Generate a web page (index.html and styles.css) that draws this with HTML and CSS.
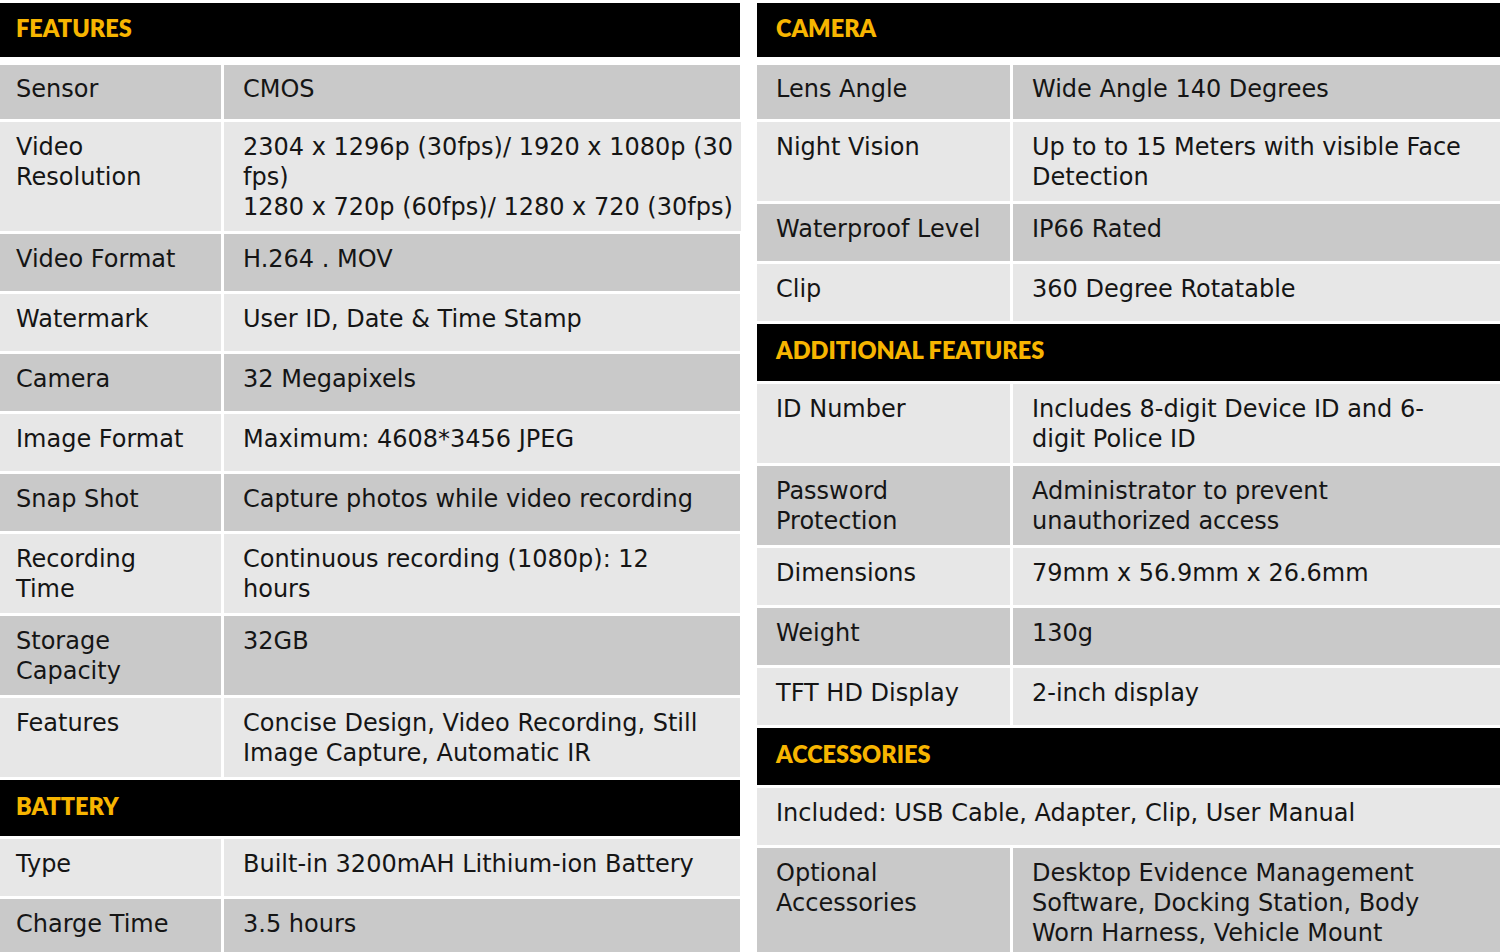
FILE: index.html
```html
<!DOCTYPE html>
<html>
<head>
<meta charset="utf-8">
<link rel="stylesheet" href="styles.css">
</head>
<body>
<div class="page">
  <div class="col col-left">
    <div class="head head-first">FEATURES</div>
    <div class="row dark first"><div class="k">Sensor</div><div class="v">CMOS</div></div>
    <div class="row light"><div class="k">Video<br>Resolution</div><div class="v">2304 x 1296p (30fps)/ 1920 x 1080p (30<br>fps)<br>1280 x 720p (60fps)/ 1280 x 720 (30fps)</div></div>
    <div class="row dark"><div class="k">Video Format</div><div class="v">H.264 . MOV</div></div>
    <div class="row light"><div class="k">Watermark</div><div class="v">User ID, Date &amp; Time Stamp</div></div>
    <div class="row dark"><div class="k">Camera</div><div class="v">32 Megapixels</div></div>
    <div class="row light"><div class="k">Image Format</div><div class="v">Maximum: 4608*3456 JPEG</div></div>
    <div class="row dark"><div class="k">Snap Shot</div><div class="v">Capture photos while video recording</div></div>
    <div class="row light"><div class="k">Recording<br>Time</div><div class="v">Continuous recording (1080p): 12<br>hours</div></div>
    <div class="row dark"><div class="k">Storage<br>Capacity</div><div class="v">32GB</div></div>
    <div class="row light"><div class="k">Features</div><div class="v">Concise Design, Video Recording, Still<br>Image Capture, Automatic IR</div></div>
    <div class="head">BATTERY</div>
    <div class="row light"><div class="k">Type</div><div class="v">Built-in 3200mAH Lithium-ion Battery</div></div>
    <div class="row dark"><div class="k">Charge Time</div><div class="v">3.5 hours</div></div>
  </div>
  <div class="col col-right">
    <div class="head head-first">CAMERA</div>
    <div class="row dark first"><div class="k">Lens Angle</div><div class="v">Wide Angle 140 Degrees</div></div>
    <div class="row light"><div class="k">Night Vision</div><div class="v">Up to to 15 Meters with visible Face<br>Detection</div></div>
    <div class="row dark"><div class="k">Waterproof Level</div><div class="v">IP66 Rated</div></div>
    <div class="row light"><div class="k">Clip</div><div class="v">360 Degree Rotatable</div></div>
    <div class="head">ADDITIONAL FEATURES</div>
    <div class="row light"><div class="k">ID Number</div><div class="v">Includes 8-digit Device ID and 6-<br>digit Police ID</div></div>
    <div class="row dark"><div class="k">Password<br>Protection</div><div class="v">Administrator to prevent<br>unauthorized access</div></div>
    <div class="row light"><div class="k">Dimensions</div><div class="v">79mm x 56.9mm x 26.6mm</div></div>
    <div class="row dark"><div class="k">Weight</div><div class="v">130g</div></div>
    <div class="row light"><div class="k">TFT HD Display</div><div class="v">2-inch display</div></div>
    <div class="head">ACCESSORIES</div>
    <div class="row light full"><div class="k">Included: USB Cable, Adapter, Clip, User Manual</div></div>
    <div class="row dark"><div class="k">Optional<br>Accessories</div><div class="v">Desktop Evidence Management<br>Software, Docking Station, Body<br>Worn Harness, Vehicle Mount</div></div>
  </div>
</div>
</body>
</html>
```

FILE: styles.css
```css
html, body {
  margin: 0;
  padding: 0;
  background: #ffffff;
  overflow: hidden;
}
body {
  font-family: "DejaVu Sans", "Liberation Sans", sans-serif;
  color: #151515;
}
.page {
  display: flex;
  gap: 17px;
  padding-top: 3px;
  border-top: 1px solid #d8d8d8;
  margin-top: -1px;
}
.col {
  display: flex;
  flex-direction: column;
  gap: 3px;
}
.col-left { width: 740px; }
.col-right { width: 743px; }
.head {
  background: #000;
  color: #f7b500;
  font-family: "Lato", sans-serif;
  font-weight: 800;
  font-size: 23.5px;
  height: 56px;
  line-height: 52px;
  padding-left: 16px;
}
.col-right .head { padding-left: 19px; height: 57px; line-height: 53px; }
.head.head-first { height: 54px; line-height: 50px; margin-bottom: 5px; }
.row {
  display: grid;
  column-gap: 3px;
  min-height: 57px;
  font-size: 24px;
  line-height: 30px;
}
.row.first { min-height: 54px; }
.col-left .row { grid-template-columns: 221px 1fr; }
.col-right .row { grid-template-columns: 253px 1fr; }
.row.full { grid-template-columns: 1fr !important; }
.k, .v {
  padding: 10px 8px 9px 19px;
  white-space: nowrap;
}
.row.first .k, .row.first .v { padding-top: 9px; }
.col-left .k { padding-left: 16px; }
.dark .k, .dark .v { background: #c9c9c9; }
.light .k, .light .v { background: #e7e7e7; }
```
